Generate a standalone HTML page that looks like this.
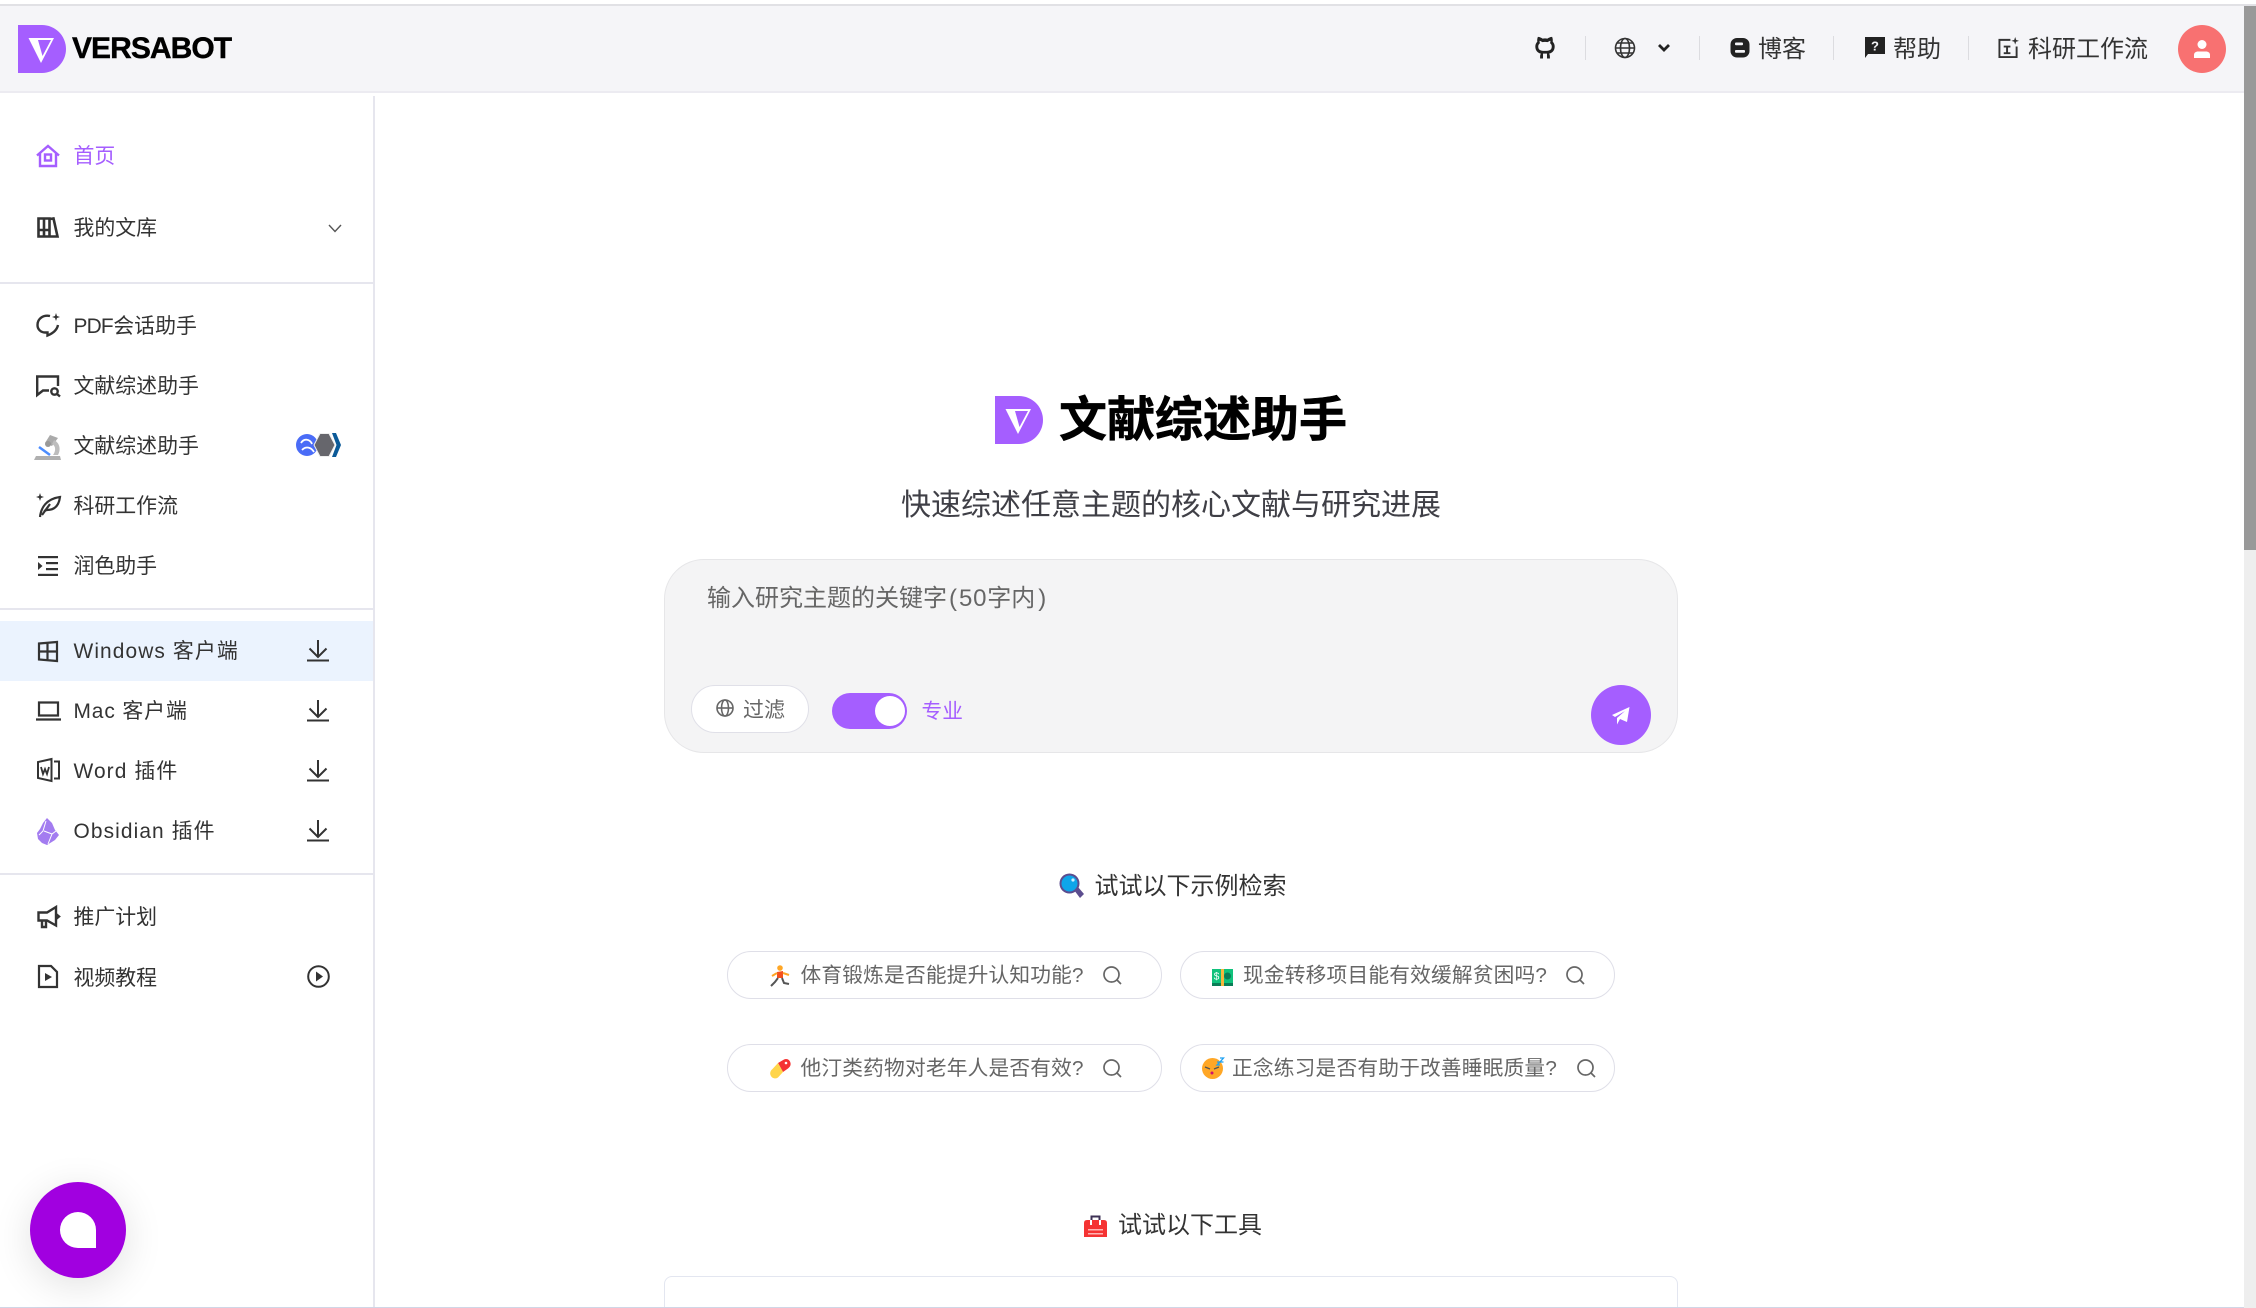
<!DOCTYPE html>
<html lang="zh-CN"><head><meta charset="utf-8"><title>VERSABOT</title>
<style>
html,body{margin:0;padding:0;background:#fff;width:2256px;height:1308px;overflow:hidden}
body{position:relative;font-family:"Liberation Sans","Noto Sans CJK SC",sans-serif;color:#333}
.t{position:absolute;white-space:nowrap;line-height:1}
.s{font-size:20.9px;left:73.500px;color:#333}
.l{letter-spacing:1.100px}
.b{position:absolute;box-sizing:border-box}
svg{position:absolute;overflow:visible}
.pill{position:absolute;box-sizing:border-box;width:435px;height:48px;border:1.5px solid #dfdfe8;border-radius:24px;background:#fff}
.p{font-size:20.7px;color:#666;letter-spacing:.2px}
.sep{position:absolute;width:1px;height:24px;top:36px;background:#dcdce0}
</style></head><body>

<!-- header -->
<div class="b" style="left:0;top:4px;width:2256px;height:2px;background:#e1e1e5"></div>
<div class="b" style="left:0;top:6px;width:2256px;height:87px;background:#f5f5f8;border-bottom:2px solid #ecebf1"></div>
<svg style="left:18px;top:25px" width="48" height="48" viewBox="0 0 48 48"><path d="M0 0H24A24 24 0 0 1 24 48H0Z" fill="#a55eff"/><path fill-rule="evenodd" d="M10.500 13H36L23 38ZM20 15 33 15 24.500 31Z" fill="#fff"/></svg>
<div class="t" style="left:72px;top:34px;font-size:30px;font-weight:700;color:#000;letter-spacing:-.95px;-webkit-text-stroke:.4px #000">VERSABOT</div>

<svg style="left:1531px;top:33.500px" width="28" height="28" viewBox="0 0 24 24"><path d="M5.900 2.500C7.500 2.500 9 3.300 9.900 4C11 3.700 13 3.700 14.100 4C15 3.300 16.500 2.500 18.100 2.500C18.700 4 18.800 5.500 18.600 6.500C19.700 7.700 20.300 9 20.300 10.700C20.300 14.500 18 16.300 15.500 16.800C16 17.500 16.200 18.300 16.200 19.500V21H7.800V19.500C7.800 18.300 8 17.500 8.500 16.800C6 16.300 3.700 14.500 3.700 10.700C3.700 9 4.300 7.700 5.400 6.500C5.200 5.500 5.300 4 5.900 2.500Z" fill="#222"/><path d="M7.400 5.800C8.200 6 9 6.500 9.800 7C11 6.600 13 6.600 14.200 7C15 6.500 15.800 6 16.600 5.800C16.700 6.500 16.600 7.200 16.300 7.800C17.300 8.600 17.800 9.500 17.800 10.700C17.800 13.500 16 14.500 12 14.500C8 14.500 6.200 13.500 6.200 10.700C6.200 9.500 6.700 8.600 7.700 7.800C7.400 7.200 7.300 6.500 7.400 5.800Z" fill="#f5f5f8"/><rect x="10.300" y="16.800" width="3.400" height="4.500" fill="#f5f5f8"/></svg>
<div class="sep" style="left:1585px"></div>
<svg style="left:1614px;top:37px" width="22" height="22" viewBox="0 0 22 22" fill="none" stroke="#333" stroke-width="1.600"><circle cx="11" cy="11" r="9.500"/><ellipse cx="11" cy="11" rx="4.500" ry="9.500"/><path d="M1.500 11H20.500M3 6H19M3 16H19"/></svg>
<svg style="left:1657px;top:43px" width="14" height="10" viewBox="0 0 14 10" fill="none" stroke="#222" stroke-width="2.800"><path d="M2 2 7 7 12 2"/></svg>
<div class="sep" style="left:1699px"></div>
<svg style="left:1730px;top:38px" width="20" height="20" viewBox="0 0 20 20"><rect x="0.500" y="0" width="19" height="19.500" rx="6.500" fill="#222"/><rect x="5" y="4.500" width="8" height="2.800" rx="1" fill="#f5f5f8"/><rect x="5" y="12" width="10" height="2.800" rx="1" fill="#f5f5f8"/></svg>
<div class="t" style="left:1758px;top:37.500px;font-size:24px;color:#333">博客</div>
<div class="sep" style="left:1833px"></div>
<svg style="left:1864px;top:37px" width="22" height="21" viewBox="0 0 22 21"><path d="M1 0H21V17H4L1 21Z" fill="#222"/><text x="11" y="13.500" font-size="13" font-weight="700" fill="#f5f5f8" text-anchor="middle" font-family="Liberation Sans">?</text></svg>
<div class="t" style="left:1893px;top:37.500px;font-size:24px;color:#333">帮助</div>
<div class="sep" style="left:1968px"></div>
<svg style="left:1998px;top:37px" width="21" height="21" viewBox="0 0 22 22" fill="none" stroke="#333" stroke-width="2"><path d="M13 3H1.500V21H19.500V10"/><path d="M6 10H13M9.500 10V17M6 17H13"/><path d="M18 0 19 3 22 4 19 5 18 8 17 5 14 4 17 3Z" fill="#333" stroke="none"/></svg>
<div class="t" style="left:2028px;top:37.500px;font-size:24px;color:#333">科研工作流</div>
<div class="b" style="left:2178px;top:25px;width:48px;height:48px;border-radius:50%;background:#f87171"></div>
<svg style="left:2190px;top:37px" width="24" height="24" viewBox="0 0 24 24" fill="#fff"><circle cx="12" cy="7.500" r="4.500"/><path d="M4 21V18C4 15.500 6 14.500 8 14.500H16C18 14.500 20 15.500 20 18V21Z"/></svg>

<!-- scrollbar -->
<div class="b" style="left:2244px;top:6px;width:12px;height:1302px;background:#eee"></div>
<div class="b" style="left:2244px;top:6px;width:12px;height:544px;background:#999"></div>

<!-- sidebar -->
<div class="b" style="left:373px;top:96px;width:2px;height:1212px;background:#e6e6ee"></div>
<div class="b" style="left:0;top:282px;width:373px;height:2px;background:#e6e6ee"></div>
<div class="b" style="left:0;top:608px;width:373px;height:2px;background:#e6e6ee"></div>
<div class="b" style="left:0;top:873px;width:373px;height:2px;background:#e6e6ee"></div>
<div class="b" style="left:0;top:621px;width:373px;height:60px;background:#ebf3fe"></div>

<svg style="left:36px;top:144px" width="24" height="24" viewBox="0 0 24 24" fill="none" stroke="#a55eff" stroke-width="2.400"><path d="M1 11.500 12 2 23 11.500"/><path d="M4 9.500V22H20V9.500"/><rect x="9" y="10.500" width="6" height="6"/></svg>
<div class="t s" style="top:147px;color:#a55eff">首页</div>

<svg style="left:37px;top:217px" width="22" height="21" viewBox="0 0 22 21" fill="none" stroke="#333" stroke-width="2.600"><path d="M1.500 1.500H7V19.500H1.500ZM7 1.500H12.500V19.500H7ZM13 2 16.500 1.500 20.500 19.500 13 19.500M1.500 13H13"/></svg>
<div class="t s" style="top:218.500px">我的文库</div>
<svg style="left:328px;top:224px" width="14" height="9" viewBox="0 0 14 9" fill="none" stroke="#555" stroke-width="1.400"><path d="M1 1 7 7.500 13 1"/></svg>

<svg style="left:36px;top:313px" width="24" height="24" viewBox="0 0 24 24" fill="none" stroke="#333" stroke-width="2.400"><path d="M14 3C7.500 1.500 1.500 5.500 1.500 12C1.500 16.500 5 19.500 9 19.500H11.500V22.500C16.500 20.500 21 17 22 12"/><path d="M20 0 21 3 24 4 21 5 20 8 19 5 16 4 19 3Z" fill="#333" stroke="none"/></svg>
<div class="t s" style="top:316.500px"><span style="letter-spacing:-.8px;margin-right:.4px">PDF</span>会话助手</div>

<svg style="left:36px;top:375px" width="25" height="22" viewBox="0 0 25 22" fill="none" stroke="#333" stroke-width="2.400"><path d="M22 11V1.500H1.200V20L7 15.500H13"/><circle cx="18.500" cy="16.500" r="3.200"/><path d="M21 19 24 21.500"/></svg>
<div class="t s" style="top:376.500px">文献综述助手</div>

<svg style="left:34px;top:433px" width="28" height="27" viewBox="0 0 28 27"><path d="M0 27 2 23H26L27 27Z" fill="#b0b0b0"/><path d="M16 2 24 5 18 13 11 10Z" fill="#aaa"/><path d="M20 7C26 10 27 17 24 22H19C22 18 22 13 18 11Z" fill="#bdbdbd"/><path d="M5 14 16 22" stroke="#4c8dff" stroke-width="2.500"/><circle cx="14" cy="11" r="3" fill="#999"/></svg>
<div class="t s" style="top:436.500px">文献综述助手</div>
<svg style="left:296px;top:433px" width="46" height="24" viewBox="0 0 46 24"><circle cx="11" cy="12" r="11" fill="#4a6cf7"/><path d="M5 10C8 5 14 6 16 11M6 17C10 13 15 14 18 19" stroke="#fff" stroke-width="1.800" fill="none"/><path d="M36 0H40L45 12 40 24H36L40.500 12Z" fill="#0b5a98"/><path d="M24 0.500H33L39 12 33 23.500H24L18 12Z" fill="#66666c" stroke="#eee" stroke-width="1"/></svg>

<svg style="left:36px;top:493px" width="25" height="25" viewBox="0 0 25 25" fill="none" stroke="#333" stroke-width="2.200"><path d="M4 24C5 15 10 6 24 4C23 12 19 17 11 17L8 18"/><path d="M14 11 6 22"/><path d="M4 0 5 3 8 4 5 5 4 8 3 5 0 4 3 3Z" fill="#333" stroke="none"/></svg>
<div class="t s" style="top:497px">科研工作流</div>

<svg style="left:38px;top:556px" width="20" height="20" viewBox="0 0 20 20" fill="#333"><rect y="0" width="20" height="2.200"/><rect x="8" y="6" width="12" height="2.200"/><rect x="8" y="12" width="12" height="2.200"/><rect y="17.800" width="20" height="2.200"/><path d="M0 6 4.500 10 0 14Z"/></svg>
<div class="t s" style="top:557px">润色助手</div>

<svg style="left:38px;top:641px" width="20" height="21" viewBox="0 0 20 21" fill="none" stroke="#333" stroke-width="2.200"><path d="M1 2.500 19 1V20L1 18.500ZM1 10.500H19M9.500 2V19.500"/></svg>
<div class="t s l" style="top:641.500px">Windows 客户端</div>
<svg style="left:36px;top:701px" width="25" height="20" viewBox="0 0 25 20" fill="none" stroke="#333" stroke-width="2.200"><path d="M3 1.500H22V14.500H3Z"/><path d="M0 18.500H25"/></svg>
<div class="t s l" style="top:701.500px;letter-spacing:.9px">Mac 客户端</div>
<svg style="left:37px;top:758px" width="23" height="24" viewBox="0 0 23 24" fill="none" stroke="#333" stroke-width="2"><path d="M14.500 1 1 4V20L14.500 23ZM17 3.500H22V20.500H17"/><path d="M4 9 6 16 8 11 10 16 12 9" stroke-width="1.800"/></svg>
<div class="t s l" style="top:761.500px">Word 插件</div>
<svg style="left:37px;top:818px" width="22" height="27" viewBox="0 0 22 27"><path d="M10 0 15 5 18 12 22 17 18 22 10 27 5 25 1 21 0 15 3 11 6 5Z" fill="#a37cf0"/><path d="M9 3 6 13 2 17M7 13 15 16 19 13M15 16 11 26" stroke="#fff" stroke-width="1" fill="none"/></svg>
<div class="t s l" style="top:821.500px">Obsidian 插件</div>

<svg style="left:37px;top:905px" width="23" height="23" viewBox="0 0 23 23" fill="none" stroke="#333" stroke-width="2.400"><path d="M19 2 10 7.500H1.500V15.500H10L19 20.500Z"/><path d="M5 15.500V22H9V16"/><path d="M19 9 22 11.500 19 14"/></svg>
<div class="t s" style="top:907.500px">推广计划</div>
<svg style="left:38px;top:965px" width="20" height="23" viewBox="0 0 20 23" fill="none" stroke="#333" stroke-width="2.200"><path d="M1 1H13L19 7V22H1Z"/><path d="M7 8 14 12 7 16Z" fill="#333" stroke="none"/></svg>
<div class="t s" style="top:968.500px">视频教程</div>

<svg style="left:307px;top:639.500px" width="22" height="22" viewBox="0 0 22 22" fill="none" stroke="#333" stroke-width="2"><path d="M11 0V17M2.500 8.500 11 17 19.500 8.500"/><path d="M0 20.500H22"/></svg>
<svg style="left:307px;top:699.500px" width="22" height="22" viewBox="0 0 22 22" fill="none" stroke="#333" stroke-width="2"><path d="M11 0V17M2.500 8.500 11 17 19.500 8.500"/><path d="M0 20.500H22"/></svg>
<svg style="left:307px;top:759.500px" width="22" height="22" viewBox="0 0 22 22" fill="none" stroke="#333" stroke-width="2"><path d="M11 0V17M2.500 8.500 11 17 19.500 8.500"/><path d="M0 20.500H22"/></svg>
<svg style="left:307px;top:819.500px" width="22" height="22" viewBox="0 0 22 22" fill="none" stroke="#333" stroke-width="2"><path d="M11 0V17M2.500 8.500 11 17 19.500 8.500"/><path d="M0 20.500H22"/></svg>
<svg style="left:307px;top:965px" width="23" height="23" viewBox="0 0 23 23" fill="none" stroke="#333" stroke-width="2"><circle cx="11.500" cy="11.500" r="10.300"/><path d="M9 6.500 16 11.500 9 16.500Z" fill="#333" stroke="none"/></svg>

<!-- main -->
<svg style="left:995px;top:396px" width="48" height="48" viewBox="0 0 48 48"><path d="M0 0H24A24 24 0 0 1 24 48H0Z" fill="#a55eff"/><path fill-rule="evenodd" d="M10.500 13H36L23 38ZM20 15 33 15 24.500 31Z" fill="#fff"/></svg>
<div class="t" style="left:1059px;top:396.500px;font-size:48px;font-weight:700;color:#000;-webkit-text-stroke:.6px #000">文献综述助手</div>
<div class="t" style="left:901px;top:491px;font-size:30px;color:#3f3f46">快速综述任意主题的核心文献与研究进展</div>

<div class="b" style="left:664px;top:559px;width:1013.500px;height:194px;border:1.5px solid #e6e6e8;border-radius:40px;background:#f4f4f5"></div>
<div class="t" style="left:707px;top:587px;font-size:24px;color:#666">输入研究主题的关键字<span style="margin:0 2px">(</span><span style="letter-spacing:.8px">50</span>字内<span style="margin-left:3px">)</span></div>
<div class="b" style="left:691px;top:685px;width:118px;height:48px;border:1.5px solid #e0e0e8;border-radius:24px;background:#fff"></div>
<svg style="left:716px;top:699px" width="18" height="18" viewBox="0 0 18 18" fill="none" stroke="#666" stroke-width="1.600"><circle cx="9" cy="9" r="8"/><ellipse cx="9" cy="9" rx="3.500" ry="8"/><path d="M1 9H17"/></svg>
<div class="t" style="left:743px;top:699.500px;font-size:21px;color:#666">过滤</div>
<div class="b" style="left:832px;top:693px;width:75px;height:36px;border-radius:18px;background:#a55eff"></div>
<div class="b" style="left:875px;top:696px;width:30px;height:30px;border-radius:50%;background:#fff"></div>
<div class="t" style="left:921.500px;top:701.500px;font-size:20.700px;color:#a55eff">专业</div>
<div class="b" style="left:1591px;top:685px;width:60px;height:60px;border-radius:50%;background:#a55eff"></div>
<svg style="left:1612px;top:707px" width="18" height="18" viewBox="0 0 18 18" fill="#fff"><path d="M0 8 17.500 0 15 15 8 12 5 17.500 5 11 13 4 3 10Z"/></svg>

<!-- examples -->
<svg style="left:1059px;top:873px" width="25" height="25" viewBox="0 0 25 25"><path d="M15 17 19 14 25 21 21 25Z" fill="#5c4d8f"/><circle cx="10.500" cy="10.500" r="10" fill="#5c4d8f"/><circle cx="10.500" cy="10.500" r="8" fill="#0ea5e9"/><circle cx="14" cy="7" r="1.600" fill="#cdefff"/></svg>
<div class="t" style="left:1094.500px;top:875px;font-size:24px;color:#333">试试以下示例检索</div>

<div class="pill" style="left:727px;top:951px"></div>
<div class="pill" style="left:1180px;top:951px"></div>
<div class="pill" style="left:727px;top:1044px"></div>
<div class="pill" style="left:1180px;top:1044px"></div>

<svg style="left:770px;top:965px" width="20" height="22" viewBox="0 0 20 22"><circle cx="10" cy="3" r="2.800" fill="#ffa726"/><path d="M7 7 13 6 13 13 7 13Z" fill="#f4511e"/><path d="M7 8 2 11M13 8 19 10" stroke="#ffa726" stroke-width="2" fill="none"/><path d="M8 13 5 17 1 21M12 13 14 18 19 19" stroke="#555" stroke-width="2" fill="none"/></svg>
<div class="t p" style="left:800.500px;top:965.500px">体育锻炼是否能提升认知功能?</div>
<svg style="left:1103px;top:966px" width="19" height="19" viewBox="0 0 19 19" fill="none" stroke="#666" stroke-width="1.700"><circle cx="8.500" cy="8.500" r="7.500"/><path d="M14 14 18 18"/></svg>

<svg style="left:1212px;top:969px" width="21" height="17" viewBox="0 0 21 17"><rect width="21" height="14" y="0" fill="#10c27c"/><rect y="14" width="21" height="3" fill="#0a7d56"/><rect x="9" width="3" height="17" fill="#f6b73c"/><circle cx="15.500" cy="7" r="3.500" fill="#0a7d56"/><text x="4.500" y="10.500" font-size="10" fill="#fff" text-anchor="middle" font-family="Liberation Sans">$</text></svg>
<div class="t p" style="left:1243px;top:965.500px">现金转移项目能有效缓解贫困吗?</div>
<svg style="left:1566px;top:966px" width="19" height="19" viewBox="0 0 19 19" fill="none" stroke="#666" stroke-width="1.700"><circle cx="8.500" cy="8.500" r="7.500"/><path d="M14 14 18 18"/></svg>

<svg style="left:770px;top:1058px" width="21" height="21" viewBox="0 0 21 21"><path d="M8 5 14 1.500C17 0 20 2 20.500 5C21 7 20 9 18 10.500L13 14Z" fill="#f53333"/><path d="M8 5 13 14 8 19.500C5 21.500 1.500 20 .5 17C-.3 15 .5 12.500 2.500 11Z" fill="#ffd54a"/><circle cx="16" cy="5" r="1.300" fill="#fff"/></svg>
<div class="t p" style="left:800.500px;top:1058.500px">他汀类药物对老年人是否有效?</div>
<svg style="left:1103px;top:1059px" width="19" height="19" viewBox="0 0 19 19" fill="none" stroke="#666" stroke-width="1.700"><circle cx="8.500" cy="8.500" r="7.500"/><path d="M14 14 18 18"/></svg>

<svg style="left:1202px;top:1057px" width="22" height="22" viewBox="0 0 22 22"><circle cx="10.500" cy="11.500" r="10.500" fill="#ffa726"/><path d="M3 10 8 12M12 12 17 10" stroke="#555" stroke-width="1.300" fill="none"/><circle cx="10" cy="16" r="1.500" fill="#d0106c"/><path d="M15 5H18L15 8H18M18 1H21.500L18 5H21.500" stroke="#1da1f2" stroke-width="1.300" fill="none"/></svg>
<div class="t p" style="left:1232px;top:1058.500px">正念练习是否有助于改善睡眠质量?</div>
<svg style="left:1577px;top:1059px" width="19" height="19" viewBox="0 0 19 19" fill="none" stroke="#666" stroke-width="1.700"><circle cx="8.500" cy="8.500" r="7.500"/><path d="M14 14 18 18"/></svg>

<!-- tools -->
<svg style="left:1084px;top:1215px" width="23" height="22" viewBox="0 0 23 22"><path d="M7.500 6V1.500H15.500V6" fill="none" stroke="#3d3155" stroke-width="2"/><path d="M0 8Q0 5 3 5H20Q23 5 23 8V22H0Z" fill="#f53333"/><rect x="6" y="5" width="2" height="5" fill="#fff"/><rect x="15" y="5" width="2" height="5" fill="#fff"/><rect x="4" y="14" width="15" height="1.500" fill="#ffb3b3"/><rect x="4" y="18" width="15" height="1.500" fill="#ffb3b3"/></svg>
<div class="t" style="left:1118px;top:1214px;font-size:24px;color:#333">试试以下工具</div>
<div class="b" style="left:664px;top:1276px;width:1013.500px;height:32px;border:1.5px solid #e3e6f0;border-bottom:0;border-radius:8px 8px 0 0;background:#fff"></div>
<div class="b" style="left:0;top:1307px;width:2244px;height:1px;background:#d0d6e6"></div>

<!-- chat -->
<div class="b" style="left:30px;top:1182px;width:96px;height:96px;border-radius:50%;background:#a100e0;box-shadow:0 8px 40px rgba(0,0,0,.12)"></div>
<div class="b" style="left:60px;top:1212px;width:36px;height:36px;background:#fff;border-radius:18px 18px 0 18px"></div>
</body></html>
